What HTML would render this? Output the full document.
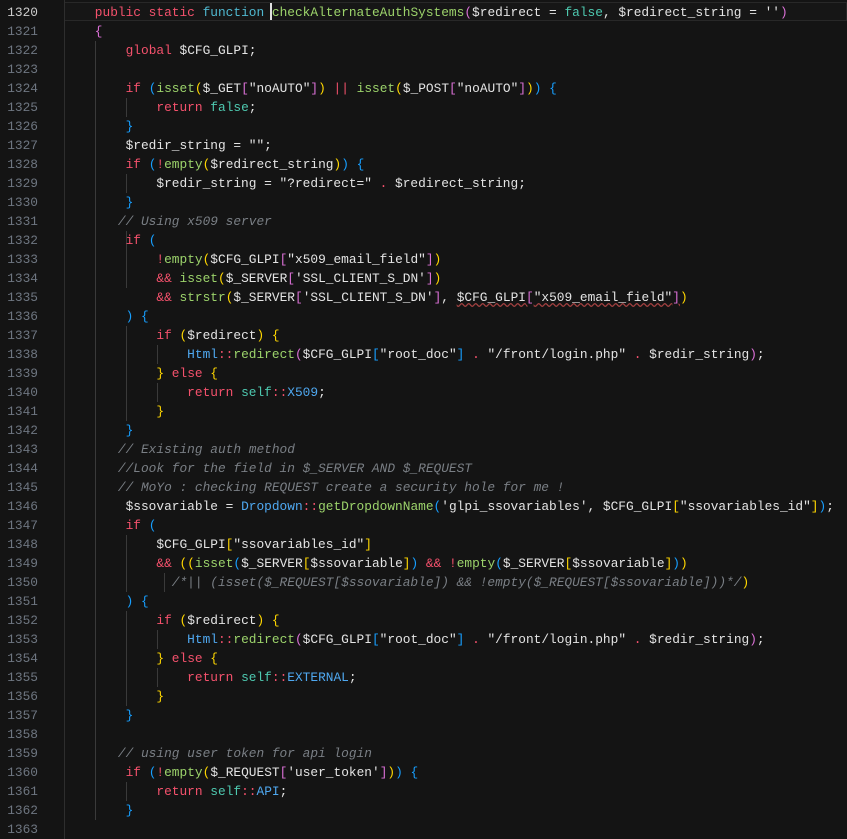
<!DOCTYPE html>
<html><head><meta charset="utf-8"><style>
body{margin:0;background:#141414;width:847px;height:839px;overflow:hidden;position:relative;font-family:"Liberation Mono",monospace;font-size:12.83px;}
.ln{position:absolute;left:0;width:38px;text-align:right;color:#6e7681;height:19px;line-height:19px}
.cl{position:absolute;left:64px;white-space:pre;color:#e4e4e4;height:19px;line-height:19px}
.k{color:#f4516c}.f{color:#4fb8d0}.n{color:#9cd36b}.c{color:#4fa8f0}.s{color:#4ec9b0}
.g{color:#ffd700}.p{color:#da70d6}.b{color:#179fff}.cm{color:#7a7f85;font-style:italic}.o{color:#f4516c}
.gd{position:absolute;width:1px;background:#3a3a3a}
</style></head><body>
<div style="position:absolute;left:64px;top:2px;width:783px;height:19px;border:1px solid #282828;box-sizing:border-box;background:#161616"></div>
<div style="position:absolute;left:64px;top:0;width:1px;height:839px;background:#2e2e2e"></div>
<div class="gd" style="left:95px;top:41px;height:779px"></div>
<div class="gd" style="left:126px;top:98px;height:19px"></div>
<div class="gd" style="left:126px;top:174px;height:19px"></div>
<div class="gd" style="left:126px;top:231px;height:57px"></div>
<div class="gd" style="left:126px;top:326px;height:95px"></div>
<div class="gd" style="left:157px;top:345px;height:19px"></div>
<div class="gd" style="left:157px;top:383px;height:19px"></div>
<div class="gd" style="left:126px;top:535px;height:57px"></div>
<div class="gd" style="left:164px;top:573px;height:19px"></div>
<div class="gd" style="left:126px;top:611px;height:95px"></div>
<div class="gd" style="left:157px;top:630px;height:19px"></div>
<div class="gd" style="left:157px;top:668px;height:19px"></div>
<div class="gd" style="left:126px;top:782px;height:19px"></div>
<div style="position:absolute;left:270px;top:3px;width:2px;height:17px;background:#e0e0e0"></div>

<div class="cl" style="top:3px">    <span class="k">public static</span> <span class="f">function</span> <span class="n">checkAlternateAuthSystems</span><span class="p">(</span>$redirect = <span class="s">false</span>, $redirect_string = ''<span class="p">)</span></div>
<div class="cl" style="top:22px">    <span class="p">{</span></div>
<div class="cl" style="top:41px">        <span class="k">global</span> $CFG_GLPI;</div>
<div class="cl" style="top:79px">        <span class="k">if</span> <span class="b">(</span><span class="n">isset</span><span class="g">(</span>$_GET<span class="p">[</span>"noAUTO"<span class="p">]</span><span class="g">)</span> <span class="o">||</span> <span class="n">isset</span><span class="g">(</span>$_POST<span class="p">[</span>"noAUTO"<span class="p">]</span><span class="g">)</span><span class="b">)</span> <span class="b">{</span></div>
<div class="cl" style="top:98px">            <span class="k">return</span> <span class="s">false</span>;</div>
<div class="cl" style="top:117px">        <span class="b">}</span></div>
<div class="cl" style="top:136px">        $redir_string = "";</div>
<div class="cl" style="top:155px">        <span class="k">if</span> <span class="b">(</span><span class="o">!</span><span class="n">empty</span><span class="g">(</span>$redirect_string<span class="g">)</span><span class="b">)</span> <span class="b">{</span></div>
<div class="cl" style="top:174px">            $redir_string = "?redirect=" <span class="o">.</span> $redirect_string;</div>
<div class="cl" style="top:193px">        <span class="b">}</span></div>
<div class="cl" style="top:212px">       <span class="cm">// Using x509 server</span></div>
<div class="cl" style="top:231px">        <span class="k">if</span> <span class="b">(</span></div>
<div class="cl" style="top:250px">            <span class="o">!</span><span class="n">empty</span><span class="g">(</span>$CFG_GLPI<span class="p">[</span>"x509_email_field"<span class="p">]</span><span class="g">)</span></div>
<div class="cl" style="top:269px">            <span class="o">&amp;&amp;</span> <span class="n">isset</span><span class="g">(</span>$_SERVER<span class="p">[</span>'SSL_CLIENT_S_DN'<span class="p">]</span><span class="g">)</span></div>
<div class="cl" style="top:288px">            <span class="o">&amp;&amp;</span> <span class="n">strstr</span><span class="g">(</span>$_SERVER<span class="p">[</span>'SSL_CLIENT_S_DN'<span class="p">]</span>, <span style="text-decoration:underline wavy #a04040">$CFG_GLPI<span class="p">[</span>"x509_email_field"<span class="p">]</span></span><span class="g">)</span></div>
<div class="cl" style="top:307px">        <span class="b">)</span> <span class="b">{</span></div>
<div class="cl" style="top:326px">            <span class="k">if</span> <span class="g">(</span>$redirect<span class="g">)</span> <span class="g">{</span></div>
<div class="cl" style="top:345px">                <span class="c">Html</span><span class="o">::</span><span class="n">redirect</span><span class="p">(</span>$CFG_GLPI<span class="b">[</span>"root_doc"<span class="b">]</span> <span class="o">.</span> "/front/login.php" <span class="o">.</span> $redir_string<span class="p">)</span>;</div>
<div class="cl" style="top:364px">            <span class="g">}</span> <span class="k">else</span> <span class="g">{</span></div>
<div class="cl" style="top:383px">                <span class="k">return</span> <span class="s">self</span><span class="o">::</span><span class="c">X509</span>;</div>
<div class="cl" style="top:402px">            <span class="g">}</span></div>
<div class="cl" style="top:421px">        <span class="b">}</span></div>
<div class="cl" style="top:440px">       <span class="cm">// Existing auth method</span></div>
<div class="cl" style="top:459px">       <span class="cm">//Look for the field in $_SERVER AND $_REQUEST</span></div>
<div class="cl" style="top:478px">       <span class="cm">// MoYo : checking REQUEST create a security hole for me !</span></div>
<div class="cl" style="top:497px">        $ssovariable = <span class="c">Dropdown</span><span class="o">::</span><span class="n">getDropdownName</span><span class="b">(</span>'glpi_ssovariables', $CFG_GLPI<span class="g">[</span>"ssovariables_id"<span class="g">]</span><span class="b">)</span>;</div>
<div class="cl" style="top:516px">        <span class="k">if</span> <span class="b">(</span></div>
<div class="cl" style="top:535px">            $CFG_GLPI<span class="g">[</span>"ssovariables_id"<span class="g">]</span></div>
<div class="cl" style="top:554px">            <span class="o">&amp;&amp;</span> <span class="g">((</span><span class="n">isset</span><span class="b">(</span>$_SERVER<span class="g">[</span>$ssovariable<span class="g">]</span><span class="b">)</span> <span class="o">&amp;&amp; !</span><span class="n">empty</span><span class="b">(</span>$_SERVER<span class="g">[</span>$ssovariable<span class="g">]</span><span class="b">)</span><span class="g">)</span></div>
<div class="cl" style="top:573px">              <span class="cm">/*|| (isset($_REQUEST[$ssovariable]) &amp;&amp; !empty($_REQUEST[$ssovariable]))*/</span><span class="g">)</span></div>
<div class="cl" style="top:592px">        <span class="b">)</span> <span class="b">{</span></div>
<div class="cl" style="top:611px">            <span class="k">if</span> <span class="g">(</span>$redirect<span class="g">)</span> <span class="g">{</span></div>
<div class="cl" style="top:630px">                <span class="c">Html</span><span class="o">::</span><span class="n">redirect</span><span class="p">(</span>$CFG_GLPI<span class="b">[</span>"root_doc"<span class="b">]</span> <span class="o">.</span> "/front/login.php" <span class="o">.</span> $redir_string<span class="p">)</span>;</div>
<div class="cl" style="top:649px">            <span class="g">}</span> <span class="k">else</span> <span class="g">{</span></div>
<div class="cl" style="top:668px">                <span class="k">return</span> <span class="s">self</span><span class="o">::</span><span class="c">EXTERNAL</span>;</div>
<div class="cl" style="top:687px">            <span class="g">}</span></div>
<div class="cl" style="top:706px">        <span class="b">}</span></div>
<div class="cl" style="top:744px">       <span class="cm">// using user token for api login</span></div>
<div class="cl" style="top:763px">        <span class="k">if</span> <span class="b">(</span><span class="o">!</span><span class="n">empty</span><span class="g">(</span>$_REQUEST<span class="p">[</span>'user_token'<span class="p">]</span><span class="g">)</span><span class="b">)</span> <span class="b">{</span></div>
<div class="cl" style="top:782px">            <span class="k">return</span> <span class="s">self</span><span class="o">::</span><span class="c">API</span>;</div>
<div class="cl" style="top:801px">        <span class="b">}</span></div>

<div class="ln" style="top:3px;color:#cccccc">1320</div>
<div class="ln" style="top:22px">1321</div><div class="ln" style="top:41px">1322</div><div class="ln" style="top:60px">1323</div>
<div class="ln" style="top:79px">1324</div><div class="ln" style="top:98px">1325</div><div class="ln" style="top:117px">1326</div>
<div class="ln" style="top:136px">1327</div><div class="ln" style="top:155px">1328</div><div class="ln" style="top:174px">1329</div>
<div class="ln" style="top:193px">1330</div><div class="ln" style="top:212px">1331</div><div class="ln" style="top:231px">1332</div>
<div class="ln" style="top:250px">1333</div><div class="ln" style="top:269px">1334</div><div class="ln" style="top:288px">1335</div>
<div class="ln" style="top:307px">1336</div><div class="ln" style="top:326px">1337</div><div class="ln" style="top:345px">1338</div>
<div class="ln" style="top:364px">1339</div><div class="ln" style="top:383px">1340</div><div class="ln" style="top:402px">1341</div>
<div class="ln" style="top:421px">1342</div><div class="ln" style="top:440px">1343</div><div class="ln" style="top:459px">1344</div>
<div class="ln" style="top:478px">1345</div><div class="ln" style="top:497px">1346</div><div class="ln" style="top:516px">1347</div>
<div class="ln" style="top:535px">1348</div><div class="ln" style="top:554px">1349</div><div class="ln" style="top:573px">1350</div>
<div class="ln" style="top:592px">1351</div><div class="ln" style="top:611px">1352</div><div class="ln" style="top:630px">1353</div>
<div class="ln" style="top:649px">1354</div><div class="ln" style="top:668px">1355</div><div class="ln" style="top:687px">1356</div>
<div class="ln" style="top:706px">1357</div><div class="ln" style="top:725px">1358</div><div class="ln" style="top:744px">1359</div>
<div class="ln" style="top:763px">1360</div><div class="ln" style="top:782px">1361</div><div class="ln" style="top:801px">1362</div>
<div class="ln" style="top:820px">1363</div>
</body></html>
